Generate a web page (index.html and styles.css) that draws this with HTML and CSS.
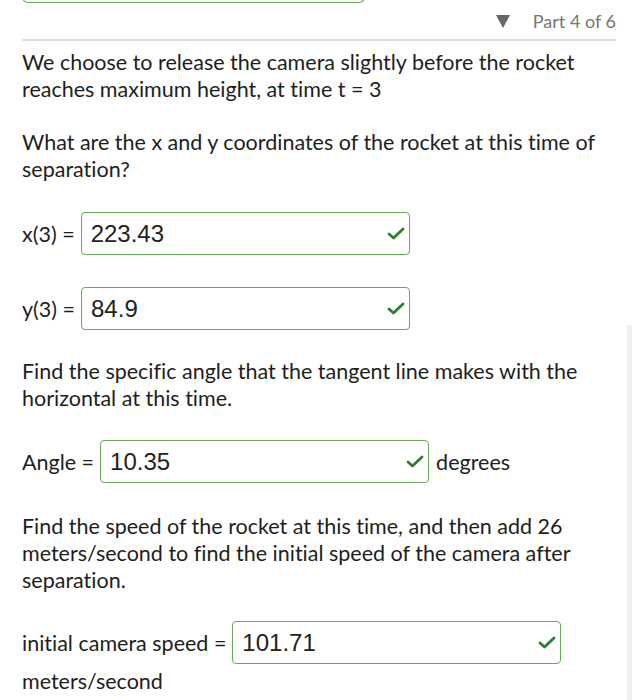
FILE: index.html
```html
<!DOCTYPE html>
<html>
<head>
<meta charset="utf-8">
<link rel="stylesheet" href="styles.css">
</head>
<body>
<div class="scrollbar"></div>
<div class="page">
  <div class="prev-box"></div>
  <div class="part-head">
    <svg class="tri" viewBox="0 0 14 13" width="14" height="13"><path d="M0 0 H14 L7 13 Z" fill="#666"/></svg>
    <span class="part-label">Part 4 of 6</span>
  </div>
  <div class="rule"></div>
  <p class="para p1">We choose to release the camera slightly before the rocket reaches maximum height, at time t = 3</p>
  <p class="para p2">What are the x and y coordinates of the rocket at this time of separation?</p>
  <div class="row r1">
    <span class="label">x(3) =</span>
    <div class="answer"><span class="val">223.43</span><svg class="check" viewBox="0 0 18 13" width="18" height="13"><path d="M2 7 L6.5 11 L16 2" fill="none" stroke="#2e7d32" stroke-width="2.8" stroke-linecap="round" stroke-linejoin="round"/></svg></div>
  </div>
  <div class="row r2">
    <span class="label">y(3) =</span>
    <div class="answer"><span class="val">84.9</span><svg class="check" viewBox="0 0 18 13" width="18" height="13"><path d="M2 7 L6.5 11 L16 2" fill="none" stroke="#2e7d32" stroke-width="2.8" stroke-linecap="round" stroke-linejoin="round"/></svg></div>
  </div>
  <p class="para p3">Find the specific angle that the tangent line makes with the horizontal at this time.</p>
  <div class="row r3">
    <span class="label">Angle =</span>
    <div class="answer"><span class="val">10.35</span><svg class="check" viewBox="0 0 18 13" width="18" height="13"><path d="M2 7 L6.5 11 L16 2" fill="none" stroke="#2e7d32" stroke-width="2.8" stroke-linecap="round" stroke-linejoin="round"/></svg></div>
    <span class="unit">degrees</span>
  </div>
  <p class="para p4">Find the speed of the rocket at this time, and then add 26 meters/second to find the initial speed of the camera after separation.</p>
  <div class="row r4">
    <span class="label">initial camera speed =</span>
    <div class="answer"><span class="val">101.71</span><svg class="check" viewBox="0 0 18 13" width="18" height="13"><path d="M2 7 L6.5 11 L16 2" fill="none" stroke="#2e7d32" stroke-width="2.8" stroke-linecap="round" stroke-linejoin="round"/></svg></div>
  </div>
  <div class="unit-below">meters/second</div>
</div>
</body>
</html>
```
FILE: styles.css
```css
html, body {
  margin: 0;
  padding: 0;
  background: #ffffff;
  overflow: hidden;
}
body {
  font-family: "Lato", "Open Sans", sans-serif;
  font-variant-ligatures: none;
  color: #1e1e1e;
  position: relative;
  width: 637px;
  height: 700px;
}
.scrollbar {
  position: absolute;
  left: 627px;
  top: 325px;
  width: 5px;
  height: 375px;
  background: #efefef;
}
.page {
  padding: 0 22px 0 22px;
  width: 594px;
}
.prev-box {
  width: 341px;
  height: 12px;
  margin-top: -10px;
  border: 1.5px solid #6aa85c;
  border-top: none;
  border-radius: 0 0 6px 6px;
}
.part-head {
  display: flex;
  justify-content: flex-end;
  align-items: center;
  margin-top: 6px;
  height: 24px;
  color: #777777;
  font-size: 18px;
}
.tri {
  display: block;
  margin-right: 23px;
}
.rule {
  height: 2px;
  background: #dddddd;
  margin-top: 6px;
}
.para {
  margin: 0;
  font-size: 21.5px;
  line-height: 27px;
}
.p1 { margin-top: 8px; }
.p2 { margin-top: 26px; }
.p3 { margin-top: 28px; }
.p4 { margin-top: 30px; }
.row {
  display: flex;
  align-items: center;
  font-size: 21.5px;
}
.r1 { margin-top: 29px; }
.r2 { margin-top: 32px; }
.r3 { margin-top: 28px; }
.r4 { margin-top: 27px; }
.label {
  margin-right: 6px;
}
.answer {
  border: 1.5px solid #6aa85c;
  border-radius: 4px;
  display: flex;
  align-items: center;
  justify-content: space-between;
  padding: 0 4px 0 9px;
  box-sizing: border-box;
  width: 329px;
  height: 43px;
}
.val {
  font-family: "Liberation Sans", Arial, sans-serif;
  font-size: 24px;
  color: #222;
}
.check {
  display: block;
}
.unit {
  margin-left: 7px;
}
.unit-below {
  font-size: 21.5px;
  margin-top: 4px;
  line-height: 27px;
}
```
